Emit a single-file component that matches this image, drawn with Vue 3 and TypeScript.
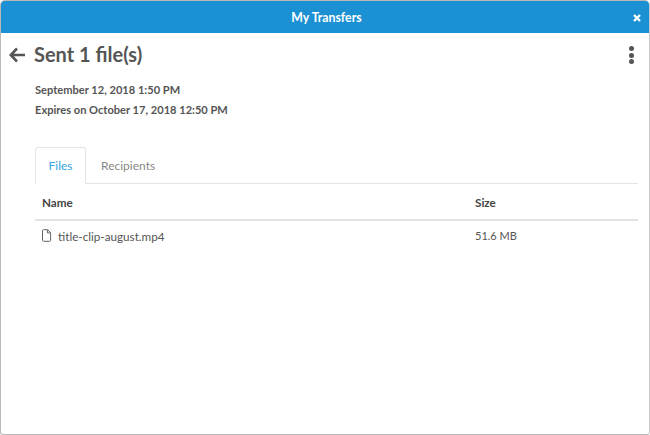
<script setup lang="ts">
const tabs = [
  { label: 'Files', active: true },
  { label: 'Recipients', active: false },
]
</script>

<template>
  <div class="window">
    <header class="titlebar">
      <span class="title">My Transfers</span>
      <svg class="close" viewBox="0 0 10 10" aria-hidden="true">
        <path d="M2 2 L8 8 M8 2 L2 8" />
      </svg>
    </header>
    <main class="body">
      <div class="heading">
        <svg class="back" viewBox="0 0 17 16" aria-hidden="true">
          <path d="M8 1.5 L1.8 8 L8 14.5 M2.5 8 H16" />
        </svg>
        <h1>Sent 1 file(s)</h1>
        <div class="dots"><i></i><i></i><i></i></div>
      </div>
      <div class="meta">
        <p>September 12, 2018 1:50 PM</p>
        <p>Expires on October 17, 2018 12:50 PM</p>
      </div>
      <nav class="tabs">
        <span v-for="t in tabs" :key="t.label" class="tab" :class="{ active: t.active }">{{ t.label }}</span>
      </nav>
      <div class="row head">
        <span class="name">Name</span>
        <span>Size</span>
      </div>
      <div class="row item">
        <span class="name file">
          <svg class="doc" viewBox="0 0 11 13" aria-hidden="true">
            <path d="M1.5 1.6 Q1.5 .7 2.4 .7 H6.6 L9.6 3.7 V11.4 Q9.6 12.3 8.7 12.3 H2.4 Q1.5 12.3 1.5 11.4 Z M6.4 .8 V3.9 H9.5" />
          </svg>
          title-clip-august.mp4
        </span>
        <span class="size">51.6 MB</span>
      </div>
    </main>
  </div>
</template>

<style>
html, body { margin: 0; background: #fff; }
</style>

<style scoped>
.window {
  width: 650px;
  height: 435px;
  box-sizing: border-box;
  display: flex;
  flex-direction: column;
  border: 1px solid #b9b9b9;
  border-right-color: #c9c9c9;
  border-radius: 5px 5px 3px 3px;
  overflow: hidden;
  font-family: Lato, "Noto Sans", sans-serif;
  color: #555;
  background: #fff;
}
.titlebar {
  height: 32px;
  flex: none;
  display: flex;
  align-items: center;
  justify-content: center;
  position: relative;
  background: #1b90d2;
  color: #fff;
}
.title { font-size: 12.3px; font-weight: 700; margin-left: 3px; }
.close {
  position: absolute;
  right: 7px;
  top: 12px;
  width: 10px;
  height: 10px;
  fill: none;
  stroke: #fff;
  stroke-width: 2.4;
}
.body { flex: 1; padding: 0 11px 0 8px; }
.heading {
  height: 44px;
  display: flex;
  align-items: center;
}
.back {
  width: 17px;
  height: 16px;
  fill: none;
  stroke: #555;
  stroke-width: 2.6;
}
h1 {
  margin: 0 0 2px 8px;
  font-size: 20px;
  font-weight: 700;
  flex: 1;
  color: #555;
}
.dots { display: flex; flex-direction: column; gap: 1.5px; margin-right: 4px; }
.dots i { width: 5px; height: 5px; border-radius: 50%; background: #555; display: block; }
.meta { margin-left: 26px; font-size: 11.1px; font-weight: 700; line-height: 20px; padding-top: 3px; }
.meta p { margin: 0; }
.tabs {
  margin: 27px 0 0 26px;
  display: flex;
  height: 36px;
  border-bottom: 1px solid #e4e4e4;
}
.tab {
  width: 51px;
  height: 37px;
  box-sizing: border-box;
  display: flex;
  align-items: center;
  justify-content: center;
  font-size: 12px;
  color: #888;
}
.tab + .tab { width: auto; padding: 0 15px; }
.tab.active {
  color: #36a3dd;
  border: 1px solid #e4e4e4;
  border-bottom: 1px solid #fff;
  border-radius: 3px 3px 0 0;
}
.row {
  margin-left: 26px;
  padding-left: 7px;
  display: flex;
  font-size: 11.7px;
}
.name { width: 433px; }
.head {
  height: 37px;
  padding-top: 1px;
  align-items: center;
  font-weight: 700;
  color: #444;
  border-bottom: 2px solid #e2e2e2;
  box-sizing: border-box;
}
.item { height: 29px; align-items: center; color: #555; }
.size { font-size: 11px; }
.file { display: flex; align-items: center; gap: 6px; }
.doc { width: 11px; height: 13px; fill: none; stroke: #666; stroke-width: 1; margin-left: -1px; }
</style>
